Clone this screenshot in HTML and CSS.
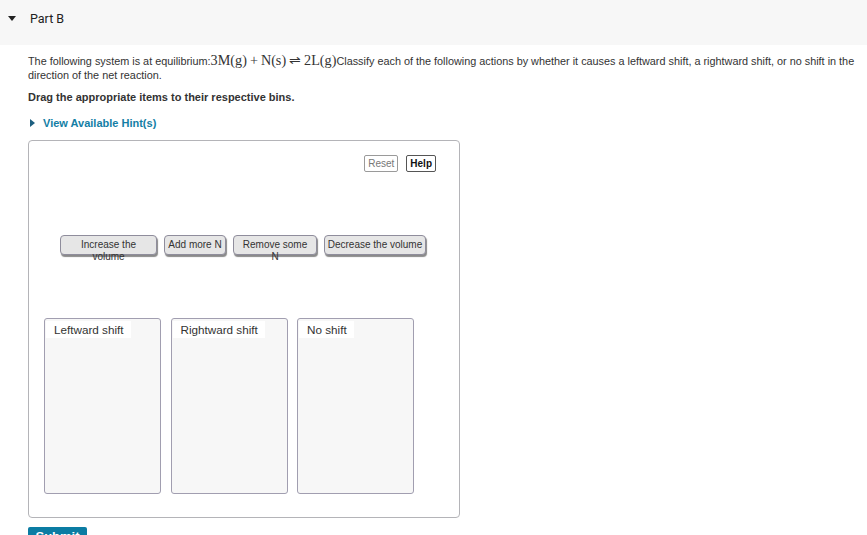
FILE: index.html
```html
<!DOCTYPE html>
<html>
<head>
<meta charset="utf-8">
<link rel="stylesheet" href="styles.css">
</head>
<body>
<div class="header">
  <svg class="caret" width="8" height="5" viewBox="0 0 8 5"><polygon points="0,0 8,0 4,5" fill="#222"/></svg>
  <span class="part">Part B</span>
</div>
<div class="content">
  <p class="intro">The following system is at equilibrium:<span class="eq">3M(g)<span class="op">+</span>N(s)<span class="rel">⇌</span>2L(g)</span>Classify each of the following actions by whether it causes a leftward shift, a rightward shift, or no shift in the direction of the net reaction.</p>
  <p class="instr">Drag the appropriate items to their respective bins.</p>
  <div class="hint">
    <svg class="hcaret" width="5" height="8" viewBox="0 0 5 8"><polygon points="0,0 5,4 0,8" fill="#1d5f80"/></svg>
    <span>View Available Hint(s)</span>
  </div>
  <div class="board">
    <div class="controls">
      <button class="ctl reset">Reset</button>
      <button class="ctl help">Help</button>
    </div>
    <div class="items">
      <div class="item w1">Increase the volume</div>
      <div class="item w2">Add more N</div>
      <div class="item w3">Remove some N</div>
      <div class="item w4">Decrease the volume</div>
    </div>
    <div class="bins">
      <div class="bin"><span class="label">Leftward shift</span></div>
      <div class="bin"><span class="label">Rightward shift</span></div>
      <div class="bin"><span class="label">No shift</span></div>
    </div>
  </div>
  <button class="submit">Submit</button>
</div>
</body>
</html>
```
FILE: styles.css
```css
html, body {
  margin: 0;
  padding: 0;
  background: #fff;
  font-family: "Liberation Sans", Arial, sans-serif;
  color: #333;
}
.header {
  height: 45px;
  background: #f7f7f7;
  display: flex;
  align-items: center;
  padding-left: 8px;
  box-sizing: border-box;
  padding-bottom: 8px;
}
.caret { display: block; }
.part {
  margin-left: 14px;
  font-family: Roboto, "Liberation Sans", sans-serif;
  font-size: 12.5px;
  color: #222;
}
.content {
  padding: 9px 0 0 28px;
}
.intro {
  margin: 0;
  font-size: 10.85px;
  line-height: 14px;
  width: 836px;
}
.eq {
  font-family: "Liberation Serif", "Times New Roman", serif;
  font-size: 14.2px;
  line-height: 0;
}
.op { margin: 0 3px; }
.rel { margin: 0 3px; }
.instr {
  margin: 8px 0 0 0;
  font-size: 11px;
  line-height: 14px;
  font-weight: bold;
}
.hint {
  margin-top: 12px;
  display: flex;
  align-items: center;
  height: 14px;
  padding-left: 2px;
  font-size: 11px;
  font-weight: bold;
  color: #137ea5;
}
.hcaret { margin-right: 8px; display: block; }
.board {
  margin-top: 10px;
  width: 432px;
  height: 378px;
  box-sizing: border-box;
  border: 1px solid #b4b4b8;
  border-radius: 4px;
  padding: 14px 23px 0 15px;
  display: flex;
  flex-direction: column;
}
.controls {
  display: flex;
  justify-content: flex-end;
  gap: 8px;
}
.ctl {
  font-family: "Liberation Sans", Arial, sans-serif;
  font-size: 10px;
  height: 17px;
  padding: 0 3px;
  background: #fff;
  border-radius: 2px;
  line-height: 15px;
}
.reset { color: #777; border: 1px solid #9a9a9a; }
.help { color: #111; font-weight: bold; border: 1px solid #555; }
.items {
  margin-top: 63px;
  padding-left: 16px;
  display: flex;
  gap: 7px;
  height: 20px;
}
.item {
  box-sizing: border-box;
  height: 20px;
  background: #e6e6e6;
  border: 1px solid #8f8d9c;
  border-radius: 4px;
  box-shadow: 1px 2px 1px #8a8a8a;
  font-size: 10px;
  line-height: 12px;
  text-align: center;
  padding-top: 3px;
  color: #333;
  flex: none;
}
.w1 { width: 97px; padding-left: 6px; padding-right: 6px; }
.w2 { width: 62px; }
.w3 { width: 84px; padding-left: 6px; padding-right: 6px; }
.w4 { width: 102px; }
.bins {
  margin-top: 63px;
  display: flex;
  gap: 9.5px;
}
.bin {
  box-sizing: border-box;
  width: 117px;
  height: 176px;
  background: #f7f7f7;
  border: 1px solid #a19eb0;
  border-radius: 3px;
  padding: 1px 0 0 1px;
}
.label {
  display: inline-block;
  background: #fff;
  font-size: 11.7px;
  line-height: 17px;
  padding: 0 7px 0 8px;
  color: #333;
}
.submit {
  margin-top: 9px;
  width: 59px;
  height: 24px;
  border: none;
  border-radius: 2px 2px 0 0;
  background: #0b7ca3;
  color: #fff;
  font-weight: bold;
  font-size: 13px;
  line-height: 16px;
  font-family: "Liberation Sans", Arial, sans-serif;
  padding: 2px 0 6px 0;
  vertical-align: top;
  display: block;
}
```
